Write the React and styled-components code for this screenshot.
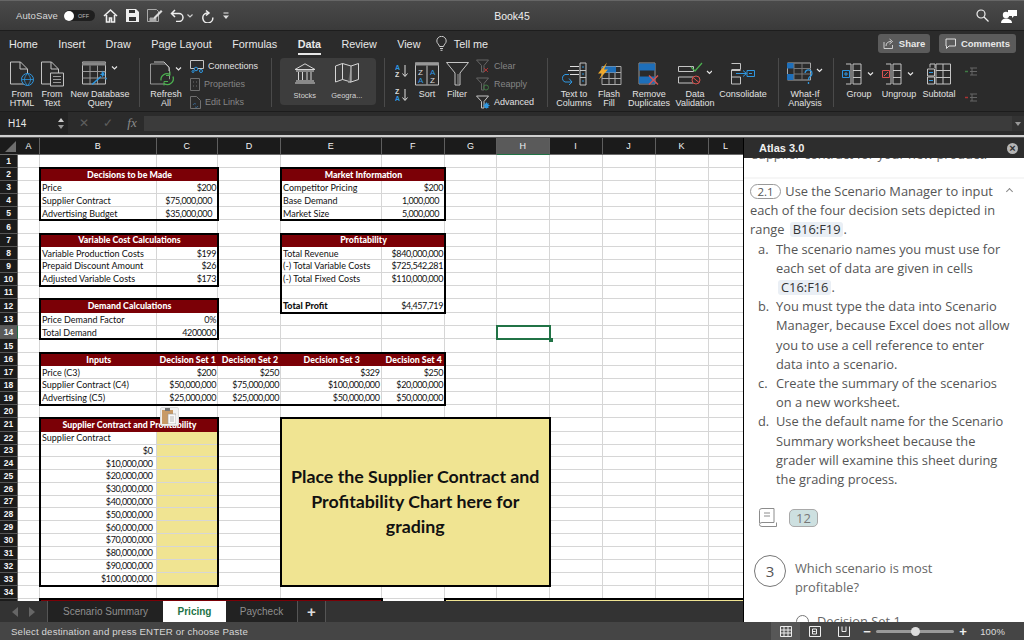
import React from 'react'
import styled, { createGlobalStyle } from 'styled-components'

const GlobalStyle = createGlobalStyle`
  html, body { margin: 0; padding: 0; background: #2b2b2b; }
  * { box-sizing: border-box; }
`

const UI = '"Liberation Sans", Arial, sans-serif'
const G = '#c4c4c4'
const DIM = '#6f6f6f'
const BL = '#2f97e0'

//#region data
const COLS = ['A', 'B', 'C', 'D', 'E', 'F', 'G', 'H', 'I', 'J', 'K', 'L']
const COL_WIDTHS = [18, 22, 116.5, 61.5, 63, 100.5, 63.5, 52, 52.5, 53, 53, 53, 35]
const ROW_HEIGHTS = [13.33, 13, 12.84, 13, 13.16, 13.5, 13.34, 12.83, 12.83, 13.17, 13.5, 13.5, 13.17, 13.16, 13.67, 13.33,
  12.84, 12.83, 13, 13.33, 13.34, 13, 12.66, 12.84, 12.83, 12.67, 12.83, 12.83, 12.84, 12.83, 12.83, 13, 13, 13, 13]
const GRID_COLS = COL_WIDTHS.map(w => w + 'px').join(' ')
const GRID_ROWS = `17px ${ROW_HEIGHTS.map(h => h + 'px').join(' ')}`

const R = (text, pad = 1) => ({ text, right: true, pad })
const T = (text, span = 1) => ({ text, title: true, span })

const cells = {
  B2: T('Decisions to be Made', 2), B3: 'Price', C3: R('$200'), B4: 'Supplier Contract', C4: R('$75,000,000', 5),
  B5: 'Advertising Budget', C5: R('$35,000,000', 5),
  E2: T('Market Information', 2), E3: 'Competitor Pricing', F3: R('$200'), E4: 'Base Demand', F4: R('1,000,000', 5),
  E5: 'Market Size', F5: R('5,000,000', 5),
  B7: T('Variable Cost Calculations', 2), B8: 'Variable Production Costs', C8: R('$199'),
  B9: 'Prepaid Discount Amount', C9: R('$26'), B10: 'Adjusted Variable Costs', C10: R('$173'),
  E7: T('Profitability', 2), E8: 'Total Revenue', F8: R('$840,000,000'), E9: '(-) Total Variable Costs', F9: R('$725,542,281'),
  E10: '(-) Total Fixed Costs', F10: R('$110,000,000'), E12: { text: 'Total Profit', bold: true }, F12: R('$4,457,719'),
  B12: T('Demand Calculations', 2), B13: 'Price Demand Factor', C13: R('0%'), B14: 'Total Demand', C14: R('4200000'),
  B16: T('Inputs'), C16: T('Decision Set 1'), D16: T('Decision Set 2'), E16: T('Decision Set 3'), F16: T('Decision Set 4'),
  B17: 'Price (C3)', C17: R('$200'), D17: R('$250'), E17: R('$329'), F17: R('$250'),
  B18: 'Supplier Contract (C4)', C18: R('$50,000,000'), D18: R('$75,000,000'), E18: R('$100,000,000'), F18: R('$20,000,000'),
  B19: 'Advertising (C5)', C19: R('$25,000,000'), D19: R('$25,000,000'), E19: R('$50,000,000'), F19: R('$50,000,000'),
  B21: T('Supplier Contract and Profitability', 2), B22: 'Supplier Contract',
  B35: T('', 4), G35: { text: '', fill: true, span: 6 },
}
;['$0', '$10,000,000', '$20,000,000', '$30,000,000', '$40,000,000', '$50,000,000', '$60,000,000', '$70,000,000',
  '$80,000,000', '$90,000,000', '$100,000,000'].forEach((v, i) => { cells['B' + (23 + i)] = R(v, 3) })
for (let r = 22; r <= 33; r++) cells['C' + r] = { text: '', fill: true }

// grid lines: one header row and one header column come first
const area = (c1, r1, c2, r2) => `${r1 + 1} / ${COLS.indexOf(c1) + 2} / ${r2 + 2} / ${COLS.indexOf(c2) + 3}`
const boxes = [area('B', 2, 'C', 5), area('E', 2, 'F', 5), area('B', 7, 'C', 10), area('E', 7, 'F', 12),
  area('B', 12, 'C', 14), area('B', 16, 'F', 19), area('B', 21, 'C', 33), area('B', 35, 'E', 35), area('G', 35, 'L', 35)]

const tabs = ['Home', 'Insert', 'Draw', 'Page Layout', 'Formulas', 'Data', 'Review', 'View']
//#endregion

//#region icons
const Ic = ({ w, h, children, ...rest }) => (
  <svg width={w} height={h} viewBox={`0 0 ${w} ${h}`} fill="none" stroke={G} strokeWidth="1" {...rest}>{children}</svg>
)
const Chev = ({ x, y, c = '#e6e6e6' }) => <path d={`M${x} ${y}l2.5 2.5 2.5-2.5`} stroke={c} strokeWidth="1.2" fill="none" />
const Doc = ({ h = 23, w = 17 }) => <path d={`M.5 .5h${w - 7}l7 7v${h - 8}h-${w}z M${w - 7} .5v7h7`} />

const HomeIc = () => <Ic w={15} h={15} stroke="#eee" strokeWidth="1.6"><path d="M1 8l6.5-6 6.5 6M3.5 7v7h3v-4h2v4h3V7" /></Ic>
const SaveIc = () => <Ic w={13} h={13}><path d="M0 0h10l3 3v10H0z" fill="#eee" stroke="none" /><path d="M3 1h6v3H3zM3 8h7v4H3z" fill="#333" stroke="none" /></Ic>
const EditSaveIc = () => <Ic w={16} h={13} stroke="#aaa"><path d="M.5 .5h9l2 2v10H.5z" /><path d="M3 9h6v3.5H3z" fill="#aaa" /><path d="M7 8l7-7 1.5 1.5-7 7-2 .5z" fill="#ddd" stroke="none" /></Ic>
const UndoIc = () => <Ic w={14} h={13} stroke="#eee" strokeWidth="1.5"><path d="M5 1L1.5 4.5 5 8M2 4.5h7a4 4 0 0 1 0 8H6" /></Ic>
const RedoIc = () => <Ic w={13} h={14} stroke="#eee" strokeWidth="1.5"><path d="M5 1.5l3 2.5-3 2.5" /><path d="M7.5 4H6a5 5 0 1 0 5.8 4.5" /></Ic>
const QaIc = () => <Ic w={8} h={8} stroke="#ddd" strokeWidth="1.1"><path d="M1.5 1h5" /><path d="M1 3.5h6L4 7z" fill="#ddd" stroke="none" /></Ic>
const SearchIc = () => <Ic w={13} h={13} stroke="#eee" strokeWidth="1.2"><circle cx="5" cy="5" r="4" /><path d="M8 8l4.5 4.5" /></Ic>
const PersonIc = () => <Ic w={16} h={14} stroke="none"><path d="M7 1h9v6h-3l-2 2V7H7z" fill="#fff" /><circle cx="5" cy="6" r="3.2" fill="#fff" /><path d="M0 14c0-3 2-4.5 5-4.5s6 1.5 6 4.5z" fill="#fff" /></Ic>
const BulbIc = () => <Ic w={11} h={15} stroke="#ccc"><path d="M3.5 10.5C3 8 .8 7.5.8 5a4.7 4.7 0 0 1 9.4 0c0 2.5-2.2 3-2.7 5.5zM4 12.5h3M4.5 14.3h2" /></Ic>
const ShareIc = () => <Ic w={11} h={11} stroke="#ccc"><path d="M1 4v6.5h8.5V7M3 8c0-3 2-4.5 5-4.5M6.5 1l3 2.5-3 2.5" /></Ic>
const CommentIc = () => <Ic w={11} h={11} stroke="#ddd"><path d="M1 1h9.5v7H4L1.5 10.5V8H1z" /></Ic>

const FromHtmlIc = () => (
  <Ic w={24} h={25}>
    <Doc />
    <circle cx="17.5" cy="18" r="6" fill="#2b2b2b" stroke={BL} />
    <path d="M11.5 18h12M17.5 12c-4 4-4 8 0 12M17.5 12c4 4 4 8 0 12" stroke={BL} strokeWidth=".8" />
  </Ic>
)
const FromTextIc = () => (
  <Ic w={23} h={25}>
    <Doc />
    <path d="M9.5 11.5h13v13h-13z" fill="#2b2b2b" />
    <path d="M12 15h8M12 18h8M12 21h8" stroke="#999" />
  </Ic>
)
const DbIc = () => (
  <Ic w={37} h={25}>
    <path d="M.5 .5h23v22H.5z" />
    <path d="M0 1h24v3H0z" fill="#888" stroke="none" />
    <path d="M.5 10h23M.5 16.500h23M8 4v19M15.500 4v19" stroke="#999" />
    <path d="M10 23l9-8" stroke={BL} strokeWidth="1.6" />
    <path d="M20 9l1 2 2-.5-1 2 1.500 1.500-2 .1-1 1.700-.7-2-2-.5 1.700-1z" fill={BL} stroke="none" />
    <circle cx="24" cy="17" r=".9" fill={BL} stroke="none" />
    <Chev x={30} y={5} />
  </Ic>
)
const RefreshIc = () => (
  <Ic w={33} h={25}>
    <path d="M.5 2.500h15l4 4v16H.5z" opacity=".7" />
    <path d="M4 .5h10l5 5v4" />
    <path d="M11 19a6 6 0 0 1 9-6M23 15a6 6 0 0 1-9 7" stroke="#4cb050" strokeWidth="1.300" fill="#2b2b2b" />
    <path d="M20 10v4h-4M14 24v-4h4" stroke="#4cb050" />
    <Chev x={26} y={6} />
  </Ic>
)
const StocksIc = () => (
  <Ic w={22} h={21} stroke="#d6d6d6"><path d="M1 6.500L11 .8l10 5.700zM2 8h18M2 18h18M1 20h20M4.500 9v8M8.500 9v8M13 9v8M17 9v8" /></Ic>
)
const GeoIc = () => (
  <Ic w={24} h={20} stroke="#d6d6d6"><path d="M.5 3l7-2.500L16 3l7.500-2.500v16L16 19l-8.500-2.500L.5 19zM7.500 .5v16" /><path d="M16 3v16h-3" fill="#666" /></Ic>
)
const AzIc = ({ flip }) => (
  <svg width="14" height="14" viewBox="0 0 14 14" fill="none">
    <text x="0" y="6" fontFamily={UI} fontSize="7" fontWeight="700" fill={flip ? '#ddd' : BL}>{flip ? 'Z' : 'A'}</text>
    <text x="0" y="13" fontFamily={UI} fontSize="7" fontWeight="700" fill={flip ? BL : '#ddd'}>{flip ? 'A' : 'Z'}</text>
    <path d="M10 1v11M7.500 9.500l2.500 3 2.500-3" stroke="#ddd" />
  </svg>
)
const SortIc = () => (
  <svg width="24" height="23" viewBox="0 0 24 23" fill="none" stroke={G}>
    <path d="M.5 .5h23v22H.5zM12 3v19" />
    <path d="M0 0h24v3H0z" fill="#999" stroke="none" />
    <text x="3" y="12" fontFamily={UI} fontSize="8" fill="#ddd" stroke="none">Z</text>
    <text x="3" y="20" fontFamily={UI} fontSize="8" fill={BL} stroke="none">A</text>
    <text x="15" y="12" fontFamily={UI} fontSize="8" fill={BL} stroke="none">A</text>
    <text x="15" y="20" fontFamily={UI} fontSize="8" fill="#ddd" stroke="none">Z</text>
  </svg>
)
const FilterIc = () => <Ic w={23} h={24}><path d="M.5 .5h22L14 11v12H9V11z" /><path d="M12 12v10" stroke="#777" strokeWidth="1.500" /></Ic>
const TinyFilter = ({ mark, c = '#666' }) => (
  <Ic w={14} h={14} stroke={c}>
    <path d="M.5 1h12L8 6.500V13H5.500V6.500z" />
    {mark === 'x' && <path d="M8 9l4 4M12 9l-4 4" stroke="#a33" />}
    {mark === 'r' && <circle cx="10" cy="10.500" r="2.500" stroke="#3f7a44" />}
    {mark === 'a' && <path d="M7.500 10.500h6M10.500 7.500v6M8.500 8.500l4 4M12.500 8.500l-4 4" stroke={BL} strokeWidth="1.200" />}
  </Ic>
)
const ConnIc = () => (
  <Ic w={14} h={13}>
    <path d="M.5 .5h13v8H.5z" />
    <circle cx="6" cy="9" r="1.800" stroke={BL} fill="#2b2b2b" /><circle cx="11" cy="11" r="1.500" stroke={BL} /><circle cx="3" cy="11.500" r="1" stroke={BL} />
  </Ic>
)
const PropIc = () => <Ic w={10} h={13} stroke={DIM}><path d="M.5 .5h9v12h-9z" /><path d="M3 4h1M6 4h1M3 8h1M6 8h1" /></Ic>
const LinksIc = () => <Ic w={11} h={13} stroke={DIM}><path d="M.5 .5h6l4 4v8h-10z" /><path d="M3 9a2 2 0 0 1 3-1M8 10a2 2 0 0 1-3 1" stroke="#36628a" /></Ic>
const TextColIc = () => (
  <Ic w={25} h={23}>
    <path d="M8 4h9M6 8h11M8 12h9" stroke="#ddd" />
    <path d="M7 14H3a4 4 0 0 0 0 7.500h7M7 18l3 3.500-3 3" stroke={BL} transform="translate(0 -2)" />
    <path d="M18 .5h6v22h-6zM18 8h6M18 15h6" />
    <path d="M20 4.500h2M20 11.500h2M20 18.500h2" stroke={BL} />
  </Ic>
)
const FlashIc = () => (
  <Ic w={25} h={23}>
    <path d="M5 4h19v18H5zM5 10h19M5 16h19M12 4v18M18 4v18" stroke="#aaa" />
    <path d="M5 4h14v6H5z" fill="#1e6fba" stroke="none" />
    <path d="M10 0L1 11h4l-3 6 9-10H7z" fill="#f0a92c" stroke="none" />
  </Ic>
)
const RemoveDupIc = () => (
  <Ic w={22} h={23}>
    <path d="M1 .5h16v21H1z" stroke="#999" />
    <path d="M1 1h16v7H1zM1 14h16v7H1z" fill="#1e6fba" stroke="none" />
    <path d="M11 13l9 9M20 13l-9 9" stroke="#d9534f" strokeWidth="1.400" />
  </Ic>
)
const ValidIc = () => (
  <Ic w={34} h={22}>
    <path d="M.5 3.500h15v5H.5zM.5 14h15v6H.5z" />
    <path d="M13 4l4 4 7-8" stroke="#4cb050" strokeWidth="1.200" />
    <circle cx="18" cy="17" r="4" stroke="#d9534f" fill="#2b2b2b" />
    <path d="M15 14.500l6 5" stroke="#d9534f" />
    <Chev x={29} y={8} />
  </Ic>
)
const ConsolidateIc = () => (
  <Ic w={24} h={22}>
    <path d="M.5 .5h9v6h-9M.5 7.500h9M.5 7v7M.5 14h9v7h-9z" />
    <path d="M5 10.500h10M12 7.500l3.500 3-3.500 3" stroke={BL} />
    <path d="M16 7.500h7.500v6H16zM18 10.500h3" stroke={BL} />
  </Ic>
)
const WhatIfIc = () => (
  <Ic w={36} h={24}>
    <path d="M.5 1h23v17H.5z" stroke="#aaa" />
    <path d="M0 1h7v5.500H0zM0 12h7v6H0z" fill="#1e6fba" stroke="none" />
    <path d="M7 6.500h17M7 12h17M7 1v17M15 1v17" stroke="#777" />
    <path d="M18 11a3.500 3.500 0 1 1 5 3.500c-1.300.8-1.500 1.500-1.500 3.500M21.500 20v2" stroke={BL} strokeWidth="1.300" />
    <Chev x={30} y={7} />
  </Ic>
)
const OutlineIc = ({ mark, chev = true }) => (
  <Ic w={34} h={21}>
    <path d="M4 .5H9v20H4M11 .5h8v20h-8zM11 7h8M11 14h8" />
    <path d="M.5 7h7v7h-7z" fill="#2b2b2b" stroke={mark === 'red' ? '#d9534f' : BL} />
    {mark === 'red'
      ? <path d="M2 12.500L6 8.500" stroke="#d9534f" />
      : <path d="M2 10.500h4M4 8.500v4" stroke={BL} />}
    {chev && <Chev x={26} y={9} />}
  </Ic>
)
const SubtotalIc = () => (
  <Ic w={24} h={21}>
    <path d="M3 .5h5v4M3 .5V4M9 .5h14.500v20H9zM9 7h14.500M9 14h14.500M16 .5v20" />
    <path d="M.5 5.500h7v7h-7zM.5 13.500h7v7h-7z" fill="#2b2b2b" />
    <path d="M2 9h4M2 17h4" stroke={BL} />
  </Ic>
)
const TinyOutline = ({ c }) => (
  <Ic w={12} h={9} stroke="#666"><path d="M5 1h7M5 4.500h7M5 8h7M7 1v7" /><path d="M0 4.500h3" stroke={c} strokeWidth="1.500" /></Ic>
)
const PasteIc = () => (
  <Ic w={14} h={16} stroke="none">
    <path d="M0 2h11v14H0z" fill="#c89a66" />
    <path d="M3 0h5v3H3z" fill="#777" />
    <path d="M6 6h8v10H6z" fill="#fafafa" stroke="#999" strokeWidth=".6" />
    <path d="M8 9h4M8 11h4M8 13h4" stroke="#999" strokeWidth=".7" />
  </Ic>
)
const BookIc = () => (
  <Ic w={18} h={19} stroke="#8c8c8c"><path d="M.5 15V2.500Q.5.500 3 .5h12v14H3q-2.500 0-2.500 2t2.500 2h14.500v-4M5 5h6M5 8h6" /></Ic>
)
const GridViewIc = () => <Ic w={12} h={11} stroke="#eee"><path d="M.5 .5h11v10H.5zM.5 4h11M.5 7h11M4 .5v10M8 .5v10" /></Ic>
const LayoutViewIc = () => <Ic w={12} h={11} stroke="#eee"><path d="M.5 .5h11v10H.5z" /><path d="M3.500 3h4v5h-4zM3.500 5.500h3" /></Ic>
const BreakViewIc = () => <Ic w={12} h={11} stroke="#eee"><path d="M.5 .5v10h11V.5M4 .5v5h4V.5" /></Ic>
//#endregion

export default function App() {
  return (
    <Window>
      <GlobalStyle />
      <TitleBar>
        <AutoSave>AutoSave</AutoSave>
        <Toggle><Knob /><ToggleText>OFF</ToggleText></Toggle>
        <QuickTools>
          <HomeIc /><SaveIc /><EditSaveIc />
          <UndoGroup><UndoIc /><Ic w={6} h={4}><Chev x={.5} y={.5} c="#ccc" /></Ic></UndoGroup>
          <RedoIc /><QaIc />
        </QuickTools>
        <DocTitle>Book45</DocTitle>
        <TitleRight><SearchIc /><PersonIc /></TitleRight>
      </TitleBar>

      <TabBar>
        {tabs.map(t => <Tab key={t} $active={t === 'Data'}>{t}</Tab>)}
        <TellMe><BulbIc />Tell me</TellMe>
        <TabActions>
          <TabAction $w={52}><ShareIc />Share</TabAction>
          <TabAction $w={77}><CommentIc />Comments</TabAction>
        </TabActions>
      </TabBar>

      <Ribbon>
        <RibbonBtn $w={30}><FromHtmlIc /><BtnLabel>From<br />HTML</BtnLabel></RibbonBtn>
        <RibbonBtn $w={30}><FromTextIc /><BtnLabel>From<br />Text</BtnLabel></RibbonBtn>
        <RibbonBtn $w={66}><DbIc /><BtnLabel>New Database<br />Query</BtnLabel></RibbonBtn>
        <Sep $ml={6} />
        <RibbonBtn $w={36}><RefreshIc /><BtnLabel>Refresh<br />All</BtnLabel></RibbonBtn>
        <SmallList $w={73} $ml={6}>
          <SmallItem><ConnIc />Connections</SmallItem>
          <SmallItem $off><PropIc />Properties</SmallItem>
          <SmallItem $off><LinksIc />Edit Links</SmallItem>
        </SmallList>
        <Sep />
        <DataTypes>
          <DataType><StocksIc /><span>Stocks</span></DataType>
          <DataType><GeoIc /><span>Geogra...</span></DataType>
        </DataTypes>
        <Sep />
        <SortColumn><AzIc /><AzIc flip /></SortColumn>
        <RibbonBtn $w={30}><SortIc /><BtnLabel>Sort</BtnLabel></RibbonBtn>
        <RibbonBtn $w={30}><FilterIc /><BtnLabel>Filter</BtnLabel></RibbonBtn>
        <SmallList $w={63} $ml={4}>
          <SmallItem $off><TinyFilter mark="x" />Clear</SmallItem>
          <SmallItem $off><TinyFilter mark="r" />Reapply</SmallItem>
          <SmallItem><TinyFilter mark="a" c={G} />Advanced</SmallItem>
        </SmallList>
        <Sep />
        <RibbonBtn $w={36}><TextColIc /><BtnLabel>Text to<br />Columns</BtnLabel></RibbonBtn>
        <RibbonBtn $w={34}><FlashIc /><BtnLabel>Flash<br />Fill</BtnLabel></RibbonBtn>
        <RibbonBtn $w={46}><RemoveDupIc /><BtnLabel>Remove<br />Duplicates</BtnLabel></RibbonBtn>
        <RibbonBtn $w={46}><ValidIc /><BtnLabel>Data<br />Validation</BtnLabel></RibbonBtn>
        <RibbonBtn $w={50}><ConsolidateIc /><BtnLabel>Consolidate</BtnLabel></RibbonBtn>
        <Sep $ml={10} />
        <RibbonBtn $w={36}><WhatIfIc /><BtnLabel>What-If<br />Analysis</BtnLabel></RibbonBtn>
        <Sep $ml={10} />
        <RibbonBtn $w={34}><OutlineIc /><BtnLabel>Group</BtnLabel></RibbonBtn>
        <RibbonBtn $w={46}><OutlineIc mark="red" /><BtnLabel>Ungroup</BtnLabel></RibbonBtn>
        <RibbonBtn $w={34}><SubtotalIc /><BtnLabel>Subtotal</BtnLabel></RibbonBtn>
        <TinyColumn><TinyOutline c="#3f7a44" /><TinyOutline c="#a33" /></TinyColumn>
      </Ribbon>

      <FormulaBar>
        <NameBox>H14<Stepper><i /><b /></Stepper></NameBox>
        <FormulaIcon $ml={4}>✕</FormulaIcon>
        <FormulaIcon>✓</FormulaIcon>
        <FxLabel>fx</FxLabel>
        <FormulaInput />
        <FormulaDrop />
      </FormulaBar>

      <Strip />

      <Body>
        <SheetColumn>
          <SheetView>
            <SheetStage>
              <Sheet>
                <Corner />
                {COLS.map(c => <ColHead key={c} $on={c === 'H'}>{c}</ColHead>)}
                {ROW_HEIGHTS.map((_, i) => {
                  const row = i + 1
                  let skip = 0
                  return (
                    <React.Fragment key={row}>
                      <RowHead $on={row === 14}>{row < 35 ? row : ''}</RowHead>
                      {COLS.map(c => {
                        if (skip > 0) { skip--; return null }
                        let cell = cells[c + row]
                        if (typeof cell === 'string') cell = { text: cell }
                        if (!cell) return <Cell key={c} />
                        if (cell.span > 1) skip = cell.span - 1
                        return (
                          <Cell key={c} $span={cell.span || 1} $title={cell.title} $fill={cell.fill}
                            $right={cell.right} $pad={cell.pad} $bold={cell.bold}>{cell.text}</Cell>
                        )
                      })}
                    </React.Fragment>
                  )
                })}
              </Sheet>
              <SheetOverlay>
                {boxes.map(b => <TableBox key={b} $area={b} />)}
                <ChartNote $area={area('E', 21, 'H', 33)}>
                  Place the Supplier Contract and<br />Profitability Chart here for<br />grading
                </ChartNote>
                <Selection $area={area('H', 14, 'H', 14)}><Handle /></Selection>
                <PasteAnchor $area={area('C', 20, 'C', 20)}><PasteButton><PasteIc /></PasteButton></PasteAnchor>
              </SheetOverlay>
            </SheetStage>
          </SheetView>
          <SheetTabs>
            <TabNav><NavArrow /><NavArrow $next /></TabNav>
            <SheetTab $w={115}>Scenario Summary</SheetTab>
            <SheetTab $w={63} $active>Pricing</SheetTab>
            <SheetTab $w={71}>Paycheck</SheetTab>
            <AddSheet>+</AddSheet>
          </SheetTabs>
        </SheetColumn>

        <Panel>
          <PanelHead>
            Atlas 3.0
            <CloseDot>×</CloseDot>
          </PanelHead>
          <PanelScroll>
            <ClippedLine><span>supplier contract for your new product.</span></ClippedLine>
            <Band />
            <StepText>
              <StepBadge>2.1</StepBadge> Use the Scenario Manager to input<Caret />
              <br />each of the four decision sets depicted in
              <br />range <Chip>B16:F19</Chip>.
            </StepText>
            <SubList>
              <SubItem><em>a.</em><p>The scenario names you must use for<br />each set of data are given in cells<br /><Chip>C16:F16</Chip>.</p></SubItem>
              <SubItem><em>b.</em><p>You must type the data into Scenario<br />Manager, because Excel does not allow<br />you to use a cell reference to enter<br />data into a scenario.</p></SubItem>
              <SubItem><em>c.</em><p>Create the summary of the scenarios<br />on a new worksheet.</p></SubItem>
              <SubItem><em>d.</em><p>Use the default name for the Scenario<br />Summary worksheet because the<br />grader will examine this sheet during<br />the grading process.</p></SubItem>
            </SubList>
            <Reference><BookIc /><RefCount>12</RefCount></Reference>
            <Question>
              <QuestionNo>3</QuestionNo>
              <p>Which scenario is most<br />profitable?</p>
            </Question>
            <Option><Radio />Decision Set 1</Option>
          </PanelScroll>
        </Panel>
      </Body>

      <StatusBar>
        Select destination and press ENTER or choose Paste
        <StatusRight>
          <ViewBtn $on><GridViewIc /></ViewBtn>
          <ViewBtn><LayoutViewIc /></ViewBtn>
          <ViewBtn><BreakViewIc /></ViewBtn>
          <ZoomSign>−</ZoomSign>
          <Slider><Thumb /></Slider>
          <ZoomSign>+</ZoomSign>
          <ZoomValue>100%</ZoomValue>
        </StatusRight>
      </StatusBar>
    </Window>
  )
}

//#region styled
const Window = styled.div`
  width: 1024px;
  height: 640px;
  display: flex;
  flex-direction: column;
  overflow: hidden;
  font-family: ${UI};
  background: #2b2b2b;
`
const TitleBar = styled.div`
  height: 31px;
  flex: none;
  display: flex;
  align-items: center;
  padding: 0 7px 0 16px;
  position: relative;
  background: linear-gradient(#4a4a4a, #3a3a3a);
  border-top: 1px solid #666;
  border-bottom: 1px solid #1d1d1d;
  color: #e5e5e5;
`
const AutoSave = styled.span`
  font-size: 9.5px;
  letter-spacing: .1px;
  color: #d8d8d8;
`
const Toggle = styled.div`
  margin-left: 6px;
  width: 31px;
  height: 11px;
  border-radius: 6px;
  background: #1f1f1f;
  display: flex;
  align-items: center;
  gap: 4px;
`
const Knob = styled.div`
  width: 10px;
  height: 10px;
  border-radius: 50%;
  background: #fff;
`
const ToggleText = styled.span`
  font-size: 5.5px;
  color: #bbb;
`
const QuickTools = styled.div`
  margin-left: 8px;
  display: flex;
  align-items: center;
  gap: 8px;
`
const UndoGroup = styled.div`
  display: flex;
  align-items: center;
  gap: 3px;
  margin-left: -1px;
`
const DocTitle = styled.div`
  position: absolute;
  left: 0;
  right: 0;
  text-align: center;
  font-size: 10.5px;
  color: #eee;
  pointer-events: none;
`
const TitleRight = styled.div`
  margin-left: auto;
  display: flex;
  align-items: center;
  gap: 12px;
`
const TabBar = styled.div`
  height: 25px;
  flex: none;
  display: flex;
  align-items: center;
  padding: 0 8px 0 9px;
  gap: 20.4px;
  background: #2b2b2b;
`
const Tab = styled.div`
  font-size: 10.8px;
  line-height: 22px;
  color: #e8e8e8;
  font-weight: ${p => (p.$active ? 700 : 400)};
  box-shadow: ${p => (p.$active ? 'inset 0 -2px 0 #e8e8e8' : 'none')};
`
const TellMe = styled.div`
  display: flex;
  align-items: center;
  gap: 7px;
  font-size: 10.8px;
  color: #e8e8e8;
  margin-left: -5px;
`
const TabActions = styled.div`
  margin-left: auto;
  display: flex;
  gap: 9px;
`
const TabAction = styled.div`
  width: ${p => p.$w}px;
  height: 19px;
  border-radius: 3px;
  background: #5b5b5b;
  display: flex;
  align-items: center;
  justify-content: center;
  gap: 5px;
  font-size: 9.5px;
  font-weight: 700;
  color: #e8e8e8;
`
const Ribbon = styled.div`
  height: 56px;
  flex: none;
  display: flex;
  align-items: flex-start;
  padding: 2px 0 0 7px;
  background: #2b2b2b;
  border-bottom: 1px solid #1c1c1c;
`
const RibbonBtn = styled.div`
  width: ${p => p.$w}px;
  flex: none;
  display: flex;
  flex-direction: column;
  align-items: center;
  svg { height: 26px; margin: 3px 0; flex: none; }
`
const BtnLabel = styled.div`
  font-size: 9px;
  line-height: 9.4px;
  color: #e2e2e2;
  text-align: center;
  white-space: nowrap;
`
const Sep = styled.div`
  width: 1px;
  height: 49px;
  flex: none;
  background: #4a4a4a;
  margin: 0 8px 0 ${p => (p.$ml === undefined ? 8 : p.$ml)}px;
`
const SmallList = styled.div`
  width: ${p => p.$w}px;
  margin-left: ${p => p.$ml || 0}px;
  flex: none;
  height: 52px;
  display: flex;
  flex-direction: column;
  justify-content: space-between;
`
const SmallItem = styled.div`
  height: 16px;
  display: flex;
  align-items: center;
  gap: 4px;
  font-size: 9px;
  white-space: nowrap;
  color: ${p => (p.$off ? '#858585' : '#e2e2e2')};
  svg { flex: none; }
`
const DataTypes = styled.div`
  width: 96px;
  height: 47px;
  flex: none;
  display: flex;
  justify-content: space-around;
  padding: 5px 6px 0;
  border-radius: 4px;
  background: #3d3d3d;
`
const DataType = styled.div`
  display: flex;
  flex-direction: column;
  align-items: center;
  justify-content: space-between;
  height: 37px;
  font-size: 7.5px;
  color: #d4d4d4;
  white-space: nowrap;
`
const SortColumn = styled.div`
  width: 19px;
  height: 46px;
  flex: none;
  padding: 6px 0 2px 2px;
  display: flex;
  flex-direction: column;
  justify-content: space-between;
`
const TinyColumn = styled.div`
  height: 44px;
  padding-top: 9px;
  margin-left: 9px;
  display: flex;
  flex-direction: column;
  justify-content: space-between;
`
const FormulaBar = styled.div`
  height: 22px;
  flex: none;
  display: flex;
  align-items: center;
  background: #2b2b2b;
`
const NameBox = styled.div`
  width: 68px;
  height: 100%;
  padding: 0 4px 0 8px;
  display: flex;
  align-items: center;
  justify-content: space-between;
  background: #232323;
  font-size: 10px;
  color: #eaeaea;
`
const Stepper = styled.div`
  display: flex;
  flex-direction: column;
  gap: 3px;
  i, b {
    display: block;
    border-left: 3px solid transparent;
    border-right: 3px solid transparent;
  }
  i { border-bottom: 4px solid #ccc; }
  b { border-top: 4px solid #999; }
`
const FormulaIcon = styled.div`
  width: 24px;
  margin-left: ${p => p.$ml || 0}px;
  text-align: center;
  font-size: 12px;
  color: #5f5f5f;
`
const FxLabel = styled.div`
  width: 24px;
  text-align: center;
  font-family: "Liberation Serif", serif;
  font-style: italic;
  font-size: 13px;
  color: #8c8c8c;
`
const FormulaInput = styled.div`
  flex: 1;
  height: 15px;
  background: #3b3b3b;
`
const FormulaDrop = styled.div`
  width: 12px;
  height: 15px;
  background: #333;
  position: relative;
  &::after {
    content: "";
    position: absolute;
    left: 3px;
    top: 6px;
    border-left: 3px solid transparent;
    border-right: 3px solid transparent;
    border-top: 4px solid #999;
  }
`
const Strip = styled.div`
  height: 4px;
  flex: none;
  background: #cfcfcf;
  border-top: 1px solid #2b2b2b;
  border-bottom: 1px solid #555;
`
const Body = styled.div`
  flex: 1;
  min-height: 0;
  display: flex;
`
const SheetColumn = styled.div`
  width: 744px;
  flex: none;
  display: flex;
  flex-direction: column;
`
const SheetView = styled.div`
  flex: 1;
  min-height: 0;
  overflow: hidden;
  background: #fff;
`
const SheetStage = styled.div`
  position: relative;
  font-family: Lato, Carlito, sans-serif;
  color: #111;
`
const Sheet = styled.div`
  display: grid;
  grid-template-columns: ${GRID_COLS};
  grid-template-rows: ${GRID_ROWS};
`
const SheetOverlay = styled.div`
  position: absolute;
  inset: 0;
  display: grid;
  grid-template-columns: ${GRID_COLS};
  grid-template-rows: ${GRID_ROWS};
  pointer-events: none;
`
const Corner = styled.div`
  background: #1b1b1b;
  border-bottom: 1px solid #6b6b6b;
  position: relative;
  &::after {
    content: "";
    position: absolute;
    right: 2px;
    bottom: 2px;
    border-left: 11px solid transparent;
    border-bottom: 11px solid #6e6e6e;
  }
`
const ColHead = styled.div`
  background: ${p => (p.$on ? '#5a5a5a' : '#1b1b1b')};
  border-right: 1px solid #5e5e5e;
  border-bottom: 1px solid ${p => (p.$on ? '#217346' : '#6b6b6b')};
  color: ${p => (p.$on ? '#eee' : '#f4f4f4')};
  font-family: ${UI};
  font-size: 9px;
  display: flex;
  align-items: center;
  justify-content: center;
`
const RowHead = styled.div`
  background: ${p => (p.$on ? '#5a5a5a' : '#1b1b1b')};
  border-right: 1px solid ${p => (p.$on ? '#217346' : '#6b6b6b')};
  border-bottom: 1px solid #565656;
  color: #f4f4f4;
  font-family: ${UI};
  font-weight: 700;
  font-size: 8.5px;
  display: flex;
  align-items: center;
  justify-content: center;
`
const Cell = styled.div`
  grid-column: span ${p => p.$span || 1};
  min-width: 0;
  white-space: nowrap;
  display: flex;
  align-items: center;
  padding: ${p => (p.$right ? `0 ${p.$pad}px 0 0` : '0 0 0 2px')};
  justify-content: ${p => (p.$title ? 'center' : p.$right ? 'flex-end' : 'flex-start')};
  background: ${p => (p.$title ? '#7b0006' : p.$fill ? '#f0e492' : 'transparent')};
  color: ${p => (p.$title ? '#fff' : '#111')};
  font-weight: ${p => (p.$title || p.$bold ? 900 : 400)};
  font-size: ${p => (p.$title ? '8.8px' : '9px')};
  letter-spacing: ${p => (p.$right ? '-.4px' : '0')};
  border-right: 1px solid ${p => (p.$title ? 'transparent' : '#d6d6d6')};
  border-bottom: 1px solid ${p => (p.$title ? 'transparent' : '#d6d6d6')};
`
const TableBox = styled.div`
  grid-area: ${p => p.$area};
  margin: -1px;
  border: 2px solid #000;
`
const ChartNote = styled.div`
  grid-area: ${p => p.$area};
  margin: -1px;
  border: 2px solid #000;
  background: #f0e492;
  display: flex;
  align-items: center;
  justify-content: center;
  text-align: center;
  font-size: 17.8px;
  font-weight: 700;
  line-height: 25px;
  color: #111;
`
const Selection = styled.div`
  grid-area: ${p => p.$area};
  margin: -1px;
  border: 2px solid #217346;
  position: relative;
`
const Handle = styled.div`
  position: absolute;
  right: -4px;
  bottom: -4px;
  width: 4px;
  height: 4px;
  background: #217346;
`
const PasteAnchor = styled.div`
  grid-area: ${p => p.$area};
  position: relative;
`
const PasteButton = styled.div`
  position: absolute;
  left: 3px;
  top: 2px;
  width: 19px;
  height: 19px;
  display: flex;
  align-items: center;
  justify-content: center;
  border-radius: 2px;
  background: #f1f1f1;
  border: 1px solid #dcdcdc;
`
const SheetTabs = styled.div`
  height: 21px;
  flex: none;
  display: flex;
  align-items: stretch;
  background: #333;
  font-size: 10px;
`
const TabNav = styled.div`
  width: 48px;
  display: flex;
  align-items: center;
  gap: 11px;
  padding-left: 12px;
  border-right: 1px solid #555;
`
const NavArrow = styled.div`
  width: 0;
  height: 0;
  border-top: 5px solid transparent;
  border-bottom: 5px solid transparent;
  ${p => (p.$next ? 'border-left: 6px solid #666;' : 'border-right: 6px solid #666;')}
`
const SheetTab = styled.div`
  width: ${p => p.$w}px;
  display: flex;
  align-items: center;
  justify-content: center;
  background: ${p => (p.$active ? '#fff' : '#222')};
  color: ${p => (p.$active ? '#217346' : '#8f8f8f')};
  font-weight: ${p => (p.$active ? 700 : 400)};
`
const AddSheet = styled.div`
  width: 29px;
  display: flex;
  align-items: center;
  justify-content: center;
  background: #2a2a2a;
  border-left: 1px solid #555;
  border-right: 1px solid #555;
  color: #ddd;
  font-size: 15px;
  font-weight: 700;
`
const Panel = styled.div`
  flex: 1;
  min-width: 0;
  display: flex;
  flex-direction: column;
  margin-left: -1px;
  border-left: 1px solid #000;
  background: #fff;
  font-family: "Open Sans", sans-serif;
  position: relative;
`
const PanelHead = styled.div`
  height: 20px;
  flex: none;
  display: flex;
  align-items: center;
  justify-content: space-between;
  padding: 0 6px 0 15px;
  background: #2d2d2d;
  color: #f0f0f0;
  font-family: ${UI};
  font-size: 11px;
  font-weight: 700;
`
const CloseDot = styled.div`
  width: 11px;
  height: 11px;
  border-radius: 50%;
  background: #b5b5b5;
  color: #2d2d2d;
  font-size: 11px;
  line-height: 11px;
  text-align: center;
`
const PanelScroll = styled.div`
  flex: 1;
  min-height: 0;
  overflow: hidden;
  color: #555;
  font-size: 12.85px;
  line-height: 19.2px;
`
const ClippedLine = styled.div`
  height: 5px;
  overflow: hidden;
  padding-left: 8px;
  span { display: block; margin-top: -13px; white-space: nowrap; color: #666; }
`
const Band = styled.div`
  height: 2px;
  margin: 14px 0 0;
  background: #f6f6f6;
`
const StepText = styled.div`
  padding: 3px 0 0 6px;
  white-space: nowrap;
  position: relative;
`
const StepBadge = styled.span`
  display: inline-block;
  width: 31px;
  height: 15px;
  line-height: 13px;
  border: 1px solid #999;
  border-radius: 8px;
  text-align: center;
  font-size: 11.5px;
  margin-right: 1px;
`
const Caret = styled.span`
  position: absolute;
  right: 12px;
  top: 10px;
  width: 5px;
  height: 5px;
  border-left: 1px solid #888;
  border-top: 1px solid #888;
  transform: rotate(45deg);
`
const Chip = styled.span`
  display: inline-block;
  margin: 0 0 0 2px;
  padding: 0 3px;
  line-height: 15px;
  border-radius: 3px;
  background: #eaeff5;
  color: #333;
`
const SubList = styled.div``
const SubItem = styled.div`
  display: flex;
  em {
    width: 32px;
    flex: none;
    padding-left: 14px;
    font-style: normal;
  }
  p { margin: 0; white-space: nowrap; }
`
const Reference = styled.div`
  display: flex;
  align-items: center;
  gap: 12px;
  margin: 19px 0 0 15px;
`
const RefCount = styled.div`
  width: 29px;
  height: 18px;
  border: 1px solid #a9a9a9;
  border-radius: 5px;
  background: #cde0e0;
  color: #777;
  text-align: center;
  line-height: 16px;
  font-size: 13px;
`
const Question = styled.div`
  display: flex;
  gap: 9px;
  margin: 28px 0 0 10px;
  p { margin: 4px 0 0; color: #666; }
`
const QuestionNo = styled.div`
  width: 32px;
  height: 32px;
  flex: none;
  border: 1px solid #777;
  border-radius: 50%;
  text-align: center;
  line-height: 30px;
  font-size: 15px;
  color: #555;
`
const Option = styled.div`
  display: flex;
  align-items: center;
  gap: 8px;
  margin: 14px 0 0 52px;
  color: #666;
`
const Radio = styled.div`
  width: 13px;
  height: 13px;
  border: 1px solid #777;
  border-radius: 50%;
`
const StatusBar = styled.div`
  height: 18px;
  flex: none;
  display: flex;
  align-items: center;
  padding-left: 11px;
  background: #454545;
  color: #d6d6d6;
  font-size: 9.7px;
  letter-spacing: .14px;
`
const StatusRight = styled.div`
  margin-left: auto;
  height: 100%;
  display: flex;
  align-items: center;
  padding-right: 19px;
`
const ViewBtn = styled.div`
  width: 29px;
  height: 100%;
  display: flex;
  align-items: center;
  justify-content: center;
  background: ${p => (p.$on ? '#575757' : 'transparent')};
`
const ZoomSign = styled.div`
  width: 18px;
  text-align: center;
  font-size: 13px;
  font-weight: 700;
  color: #eee;
`
const Slider = styled.div`
  width: 78px;
  height: 3px;
  border-radius: 2px;
  background: #9a9a9a;
  display: flex;
  align-items: center;
  justify-content: center;
`
const Thumb = styled.div`
  width: 9px;
  height: 9px;
  border-radius: 50%;
  background: #ddd;
`
const ZoomValue = styled.div`
  margin-left: 8px;
  font-size: 9.5px;
  color: #ddd;
`
//#endregion
